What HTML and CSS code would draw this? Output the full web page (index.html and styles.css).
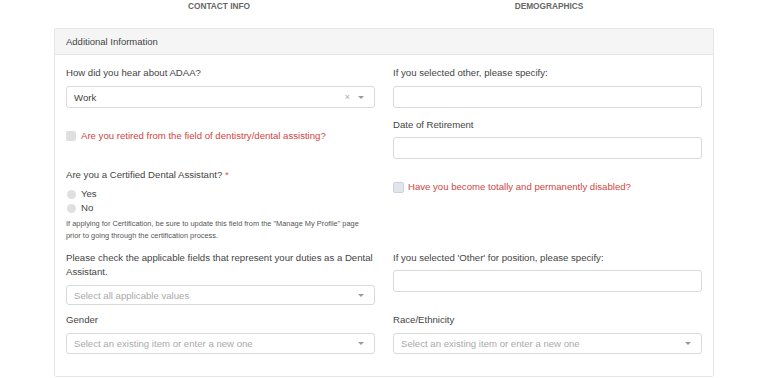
FILE: index.html
```html
<!DOCTYPE html>
<html>
<head>
<meta charset="utf-8">
<link rel="stylesheet" href="styles.css">
</head>
<body>
<div class="page">
  <div class="tabs">
    <div class="tab">CONTACT INFO</div>
    <div class="tab">DEMOGRAPHICS</div>
  </div>
  <div class="panel">
    <div class="panel-head">Additional Information</div>
    <div class="panel-body">
      <div class="row row1">
        <div class="col">
          <div class="label">How did you hear about ADAA?</div>
          <div class="select">
            <span class="value">Work</span>
            <span class="clear">×</span>
            <span class="caret"></span>
          </div>
          <div class="check check-left"><span class="box"></span><span class="red">Are you retired from the field of dentistry/dental assisting?</span></div>
          <div class="label cert">Are you a Certified Dental Assistant? <span class="star">*</span></div>
          <div class="radio first"><span class="dot"></span>Yes</div>
          <div class="radio"><span class="dot"></span>No</div>
          <div class="help">If applying for Certification, be sure to update this field from the "Manage My Profile" page prior to going through the certification process.</div>
        </div>
        <div class="col">
          <div class="label">If you selected other, please specify:</div>
          <div class="input"></div>
          <div class="label date">Date of Retirement</div>
          <div class="input tight"></div>
          <div class="check check-right"><span class="box focus"></span><span class="red">Have you become totally and permanently disabled?</span></div>
        </div>
      </div>
      <div class="row row2">
        <div class="col">
          <div class="label">Please check the applicable fields that represent your duties as a Dental Assistant.</div>
          <div class="select short">
            <span class="value ph">Select all applicable values</span>
            <span class="caret"></span>
          </div>
        </div>
        <div class="col">
          <div class="label">If you selected 'Other' for position, please specify:</div>
          <div class="input tight"></div>
        </div>
      </div>
      <div class="row row3">
        <div class="col">
          <div class="label">Gender</div>
          <div class="select mid">
            <span class="value ph">Select an existing item or enter a new one</span>
            <span class="caret"></span>
          </div>
        </div>
        <div class="col">
          <div class="label">Race/Ethnicity</div>
          <div class="select mid">
            <span class="value ph">Select an existing item or enter a new one</span>
            <span class="caret"></span>
          </div>
        </div>
      </div>
    </div>
  </div>
</div>
</body>
</html>
```

FILE: styles.css
```css
html, body {
  margin: 0;
  padding: 0;
  background: #fff;
}
body {
  font-family: "Liberation Sans", Arial, sans-serif;
  color: #444;
  font-size: 9.6px;
}
.page {
  margin-left: 54px;
  width: 660px;
}
.tabs {
  display: grid;
  grid-template-columns: 1fr 1fr;
  height: 28px;
}
.tab {
  text-align: center;
  font-size: 8.3px;
  font-weight: bold;
  color: #666;
  line-height: 12px;
  padding-top: 0;
}
.panel {
  border: 1px solid #e6e6e6;
  border-radius: 2px;
  height: 349px;
  box-sizing: border-box;
}
.panel-head {
  background: #f5f5f5;
  border-bottom: 1px solid #e6e6e6;
  height: 25px;
  line-height: 25px;
  padding-left: 11px;
  font-size: 9.5px;
  color: #444;
}
.panel-body {
  padding: 11px 11px 0 11px;
}
.row {
  display: grid;
  grid-template-columns: 1fr 1fr;
  column-gap: 18px;
}
.row2 { margin-top: 9px; }
.row3 { margin-top: 8px; }
.label {
  line-height: 14px;
  margin-bottom: 6px;
}
.row2 .col:last-child .label { margin-bottom: 5px; }
.star { color: #d9534f; }
.select, .input {
  border: 1px solid #d9d9d9;
  border-radius: 3px;
  height: 22px;
  box-sizing: border-box;
  display: flex;
  align-items: center;
  padding-left: 7px;
}
.select.short { height: 20px; }
.select.mid { height: 21px; }
.value { flex: 1; color: #444; }
.value.ph { color: #aaa; }
.clear {
  color: #aaa;
  font-size: 9px;
  margin-right: 8px;
}
.caret {
  width: 0;
  height: 0;
  border-left: 3px solid transparent;
  border-right: 3px solid transparent;
  border-top: 3px solid #999;
  margin-right: 10px;
}
.check {
  display: flex;
  align-items: center;
  line-height: 14px;
}
.check-left { margin-top: 21px; }
.check-right { margin-top: 21px; }
.box {
  width: 10px;
  height: 10px;
  background: #dfdfdf;
  border-radius: 2px;
  margin-right: 5px;
  box-sizing: border-box;
}
.box.focus {
  background: #e2e4ea;
  border: 1px solid #c8d2e6;
  width: 11px;
  height: 11px;
  margin-right: 4px;
}
.red { color: #d1453f; }
.label.cert { margin-top: 25px; margin-bottom: 5px; }
.label.date { margin-top: 10px; margin-bottom: 5px; }
.radio {
  display: flex;
  align-items: center;
  line-height: 14px;
}
.dot {
  width: 9px;
  height: 9px;
  border-radius: 50%;
  background: #e0e0e0;
  margin-left: 1px;
  margin-right: 5px;
}
.help {
  margin-top: 3px;
  font-size: 7.4px;
  line-height: 12px;
  color: #555;
}
```
